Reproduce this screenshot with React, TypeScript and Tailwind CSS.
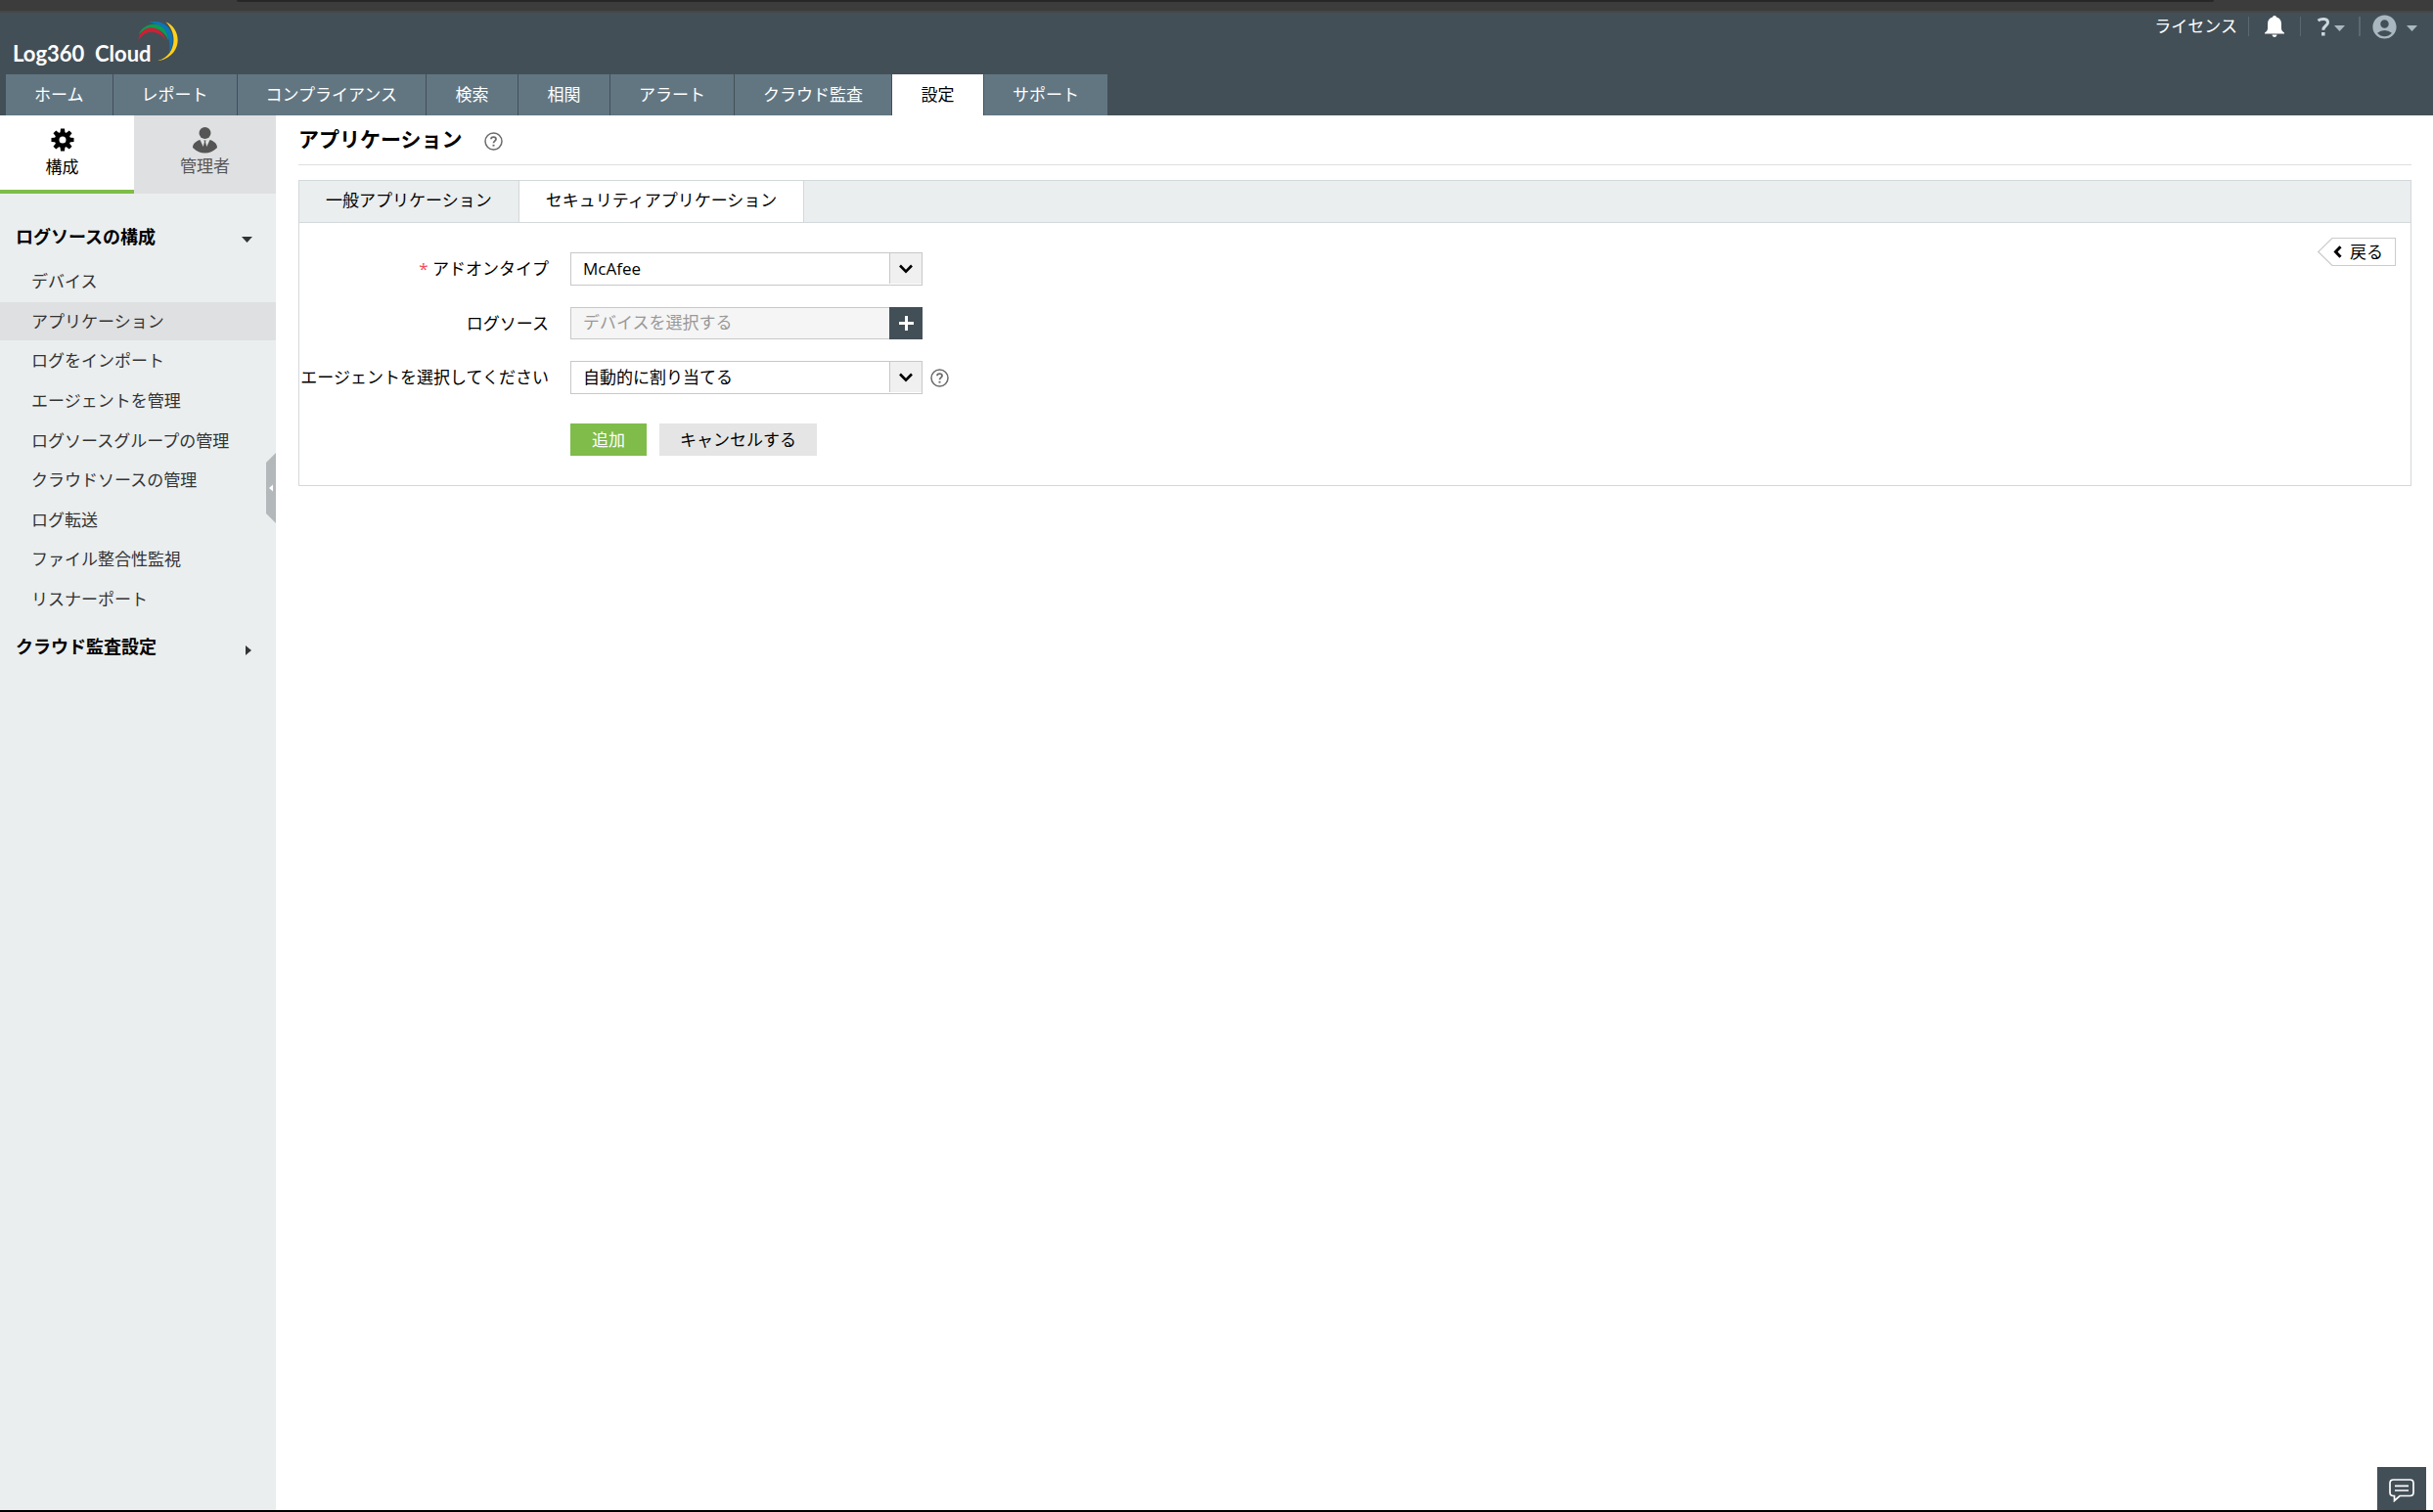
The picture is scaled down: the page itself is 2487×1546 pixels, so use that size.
import React from 'react';
import { MdAccountCircle } from 'react-icons/md';

const navItems = [
  'ホーム',
  'レポート',
  'コンプライアンス',
  '検索',
  '相関',
  'アラート',
  'クラウド監査',
  '設定',
  'サポート',
];

const logSourceItems = [
  'デバイス',
  'アプリケーション',
  'ログをインポート',
  'エージェントを管理',
  'ログソースグループの管理',
  'クラウドソースの管理',
  'ログ転送',
  'ファイル整合性監視',
  'リスナーポート',
];

const ACTIVE_NAV = '設定';
const ACTIVE_ITEM = 'アプリケーション';

const LogoArcs: React.FC = () => (
  <svg width="42" height="42" viewBox="0 0 42 42" aria-hidden="true">
    <path d="M28.500 1.500C45 8 46.500 35 22 41H20.500C37 37 42.500 15 28.500 1.500Z" fill="#ffd01c" />
    <path d="M11 1.800C27 -3 43.500 12 31.500 34C35.500 17 27 4 11 1.800Z" fill="#0b75b8" />
    <path d="M1 14C7 0 29 -1 31.300 20.500C25 7 12 4 1 14Z" fill="#0d9b50" />
    <path d="M.5 21C1.500 4 22 2 28.500 19.500C20 9.500 7 8.500 .5 21Z" fill="#cb2036" />
  </svg>
);

const GearIcon: React.FC = () => (
  <svg width="24" height="24" viewBox="-12 -12 24 24" aria-hidden="true">
    {[0, 45, 90, 135].map((a) => (
      <path key={a} d="M-2 -11.500H2L2.600 -6H-2.600ZM-2.600 6H2.600L2 11.500H-2Z" transform={`rotate(${a})`} />
    ))}
    <circle r="5.800" fill="none" stroke="#000" strokeWidth="4.600" />
  </svg>
);

const AdminIcon: React.FC = () => (
  <svg width="25" height="27" viewBox="0 0 25 27" fill="#555" aria-hidden="true">
    <circle cx="12.500" cy="6" r="6" />
    <path d="M7.500 13L10.700 20L12 15L11.300 13.500H13.700L13 15L14.300 20L17.500 13C22 14.500 25 17 25 21C21 25 17 26.500 12.500 26.500C8 26.500 4 25 0 21C0 17 3 14.500 7.500 13Z" />
  </svg>
);

const BellIcon: React.FC = () => (
  <svg width="20" height="22" viewBox="0 0 20 22" fill="#fff" aria-hidden="true">
    <path d="M10 0C11.200 0 11.800 .6 12 1.500C15.500 2.500 17 5 17 8.500V13C17 15 18 16 20 17.500V18.500H0V17.500C2 16 3 15 3 13V8.500C3 5 4.500 2.500 8 1.500C8.200 .6 8.800 0 10 0ZM7.500 19.500H12.500C12.300 21 11.300 22 10 22C8.700 22 7.700 21 7.500 19.500Z" />
  </svg>
);

const HelpButton: React.FC<{ label: string }> = ({ label }) => (
  <button type="button" aria-label={label} className="block shrink-0">
    <svg width="19" height="19" viewBox="0 0 19 19" fill="none" stroke="#6b6b6b" aria-hidden="true">
      <circle cx="9.500" cy="9.500" r="8.500" strokeWidth="1.500" />
      <path d="M7 7.300C7 4.300 12 4.400 12 7.200C12 9 9.500 9.200 9.500 11.200" strokeWidth="1.800" />
      <path d="M9.500 12.800V14.600" strokeWidth="2" />
    </svg>
  </button>
);

const CaretDown: React.FC<{ className: string }> = ({ className }) => (
  <svg width="11" height="6" viewBox="0 0 11 6" className={className} aria-hidden="true">
    <path d="M0 0H11L5.500 6Z" />
  </svg>
);

const SelectField: React.FC<{ id: string; options: string[] }> = ({ id, options }) => (
  <div className="relative w-90">
    <select id={id} className="block w-full h-[34px] appearance-none border border-[#c8c8c8] bg-white pl-3 pr-10 text-black">
      {options.map((o) => (
        <option key={o}>{o}</option>
      ))}
    </select>
    <span className="pointer-events-none absolute top-px right-px flex h-[31px] w-[33px] items-center justify-center border-l border-[#c8c8c8] bg-[#f0f0f0]">
      <svg width="14" height="10" viewBox="0 0 14 10" fill="none" stroke="#000" strokeWidth="2.600" aria-hidden="true">
        <path d="M1 1.500L7 7.700L13 1.500" />
      </svg>
    </span>
  </div>
);

const Header: React.FC = () => (
  <header className="bg-[#434f57]">
    <div className="h-[13px] border-b-2 border-[#474747] bg-[#3c3c3c] pl-[242px] pr-[224px]">
      <div className="h-0.5 rounded-b-sm bg-[#272727]"></div>
    </div>
    <div className="flex h-[63px] items-start justify-between pl-[13px] pr-4">
      <a href="#home" aria-label="Log360 Cloud" className="flex items-start pt-2">
        <span className="whitespace-pre pt-5 font-[Lato] text-[22px] leading-7 font-bold text-white">Log360  Cloud</span>
        <span className="-ml-3.5"><LogoArcs /></span>
      </a>
      <div className="flex h-7 items-center text-white">
        <a href="#license" className="pr-[11px] pb-px">ライセンス</a>
        <button type="button" aria-label="通知" className="flex h-5 items-center border-l border-[#5b6870] px-4">
          <BellIcon />
        </button>
        <button type="button" aria-label="ヘルプ" className="flex h-5 items-center gap-1 border-l border-[#5b6870] pl-4 pr-3.5">
          <svg width="14" height="19" viewBox="0 0 14 19" fill="none" stroke="#cdd8dd" strokeWidth="3" aria-hidden="true">
            <path d="M1.500 3C5 .8 11.500 .8 11.500 5C11.500 8.500 6.800 8 6.800 12.800" />
            <path d="M6.800 15V18.500" strokeWidth="3.500" />
          </svg>
          <CaretDown className="mt-1 fill-[#a9b8c0]" />
        </button>
        <button type="button" aria-label="アカウント" className="flex h-5 items-center gap-2 border-l-2 border-[#5b6870] pl-2.5">
          <MdAccountCircle className="size-[29px] text-[#a9b8c0]" />
          <CaretDown className="mt-1 fill-[#a9b8c0]" />
        </button>
      </div>
    </div>
    <nav className="flex gap-px pl-1.5 text-center">
      {navItems.map((item) => (
        <a
          key={item}
          href={`#${item}`}
          className={
            item === ACTIVE_NAV
              ? 'h-[42px] min-w-[93px] bg-white px-[29px] leading-[42px] text-black'
              : 'h-[42px] min-w-[93px] bg-[#627682] px-[29px] leading-[42px] text-white'
          }
        >
          {item}
        </a>
      ))}
    </nav>
  </header>
);

const Sidebar: React.FC = () => (
  <aside className="relative w-[282px] shrink-0 bg-[#eaeeef]">
    <div className="flex h-20">
      <a href="#config" className="flex w-[137px] flex-col items-center gap-1 border-b-4 border-[#7fbc49] bg-white pt-[13px] pr-2.5 text-black">
        <GearIcon />
        <span>構成</span>
      </a>
      <a href="#admin" className="flex flex-1 flex-col items-center gap-px bg-[#dfe0e2] pt-3 text-[#555]">
        <AdminIcon />
        <span>管理者</span>
      </a>
    </div>
    <nav className="pt-8">
      <button type="button" className="flex h-6 w-full items-center justify-between pl-4 pr-6 text-lg leading-6 font-bold text-black">
        ログソースの構成
        <CaretDown className="mt-1.5 fill-[#333]" />
      </button>
      <ul className="mt-3.5 flex h-[364px] flex-col justify-between">
        {logSourceItems.map((item) => (
          <li key={item}>
            <a
              href={`#${item}`}
              className={item === ACTIVE_ITEM ? 'block h-[39px] bg-[#dfe0e2] pl-8 leading-[39px]' : 'block h-[39px] pl-8 leading-[39px]'}
            >
              {item}
            </a>
          </li>
        ))}
      </ul>
      <button type="button" className="mt-[17px] flex h-6 w-full items-center justify-between pl-4 pr-[25px] text-lg leading-6 font-bold text-black">
        クラウド監査設定
        <svg width="6" height="10" viewBox="0 0 6 10" fill="#333" className="mt-2" aria-hidden="true">
          <path d="M0 0L6 5L0 10Z" />
        </svg>
      </button>
    </nav>
    <button type="button" aria-label="サイドバーを閉じる" className="absolute top-[345px] right-0">
      <svg width="10" height="72" viewBox="0 0 10 72" aria-hidden="true">
        <path d="M10 0V72L0 62V10Z" fill="#b3b8bb" />
        <path d="M7 32.500V39.500L3 36Z" fill="#fff" />
      </svg>
    </button>
  </aside>
);

const AddonForm: React.FC = () => (
  <form className="flex flex-col gap-[22px] py-[30px]" onSubmit={(e) => e.preventDefault()}>
    <div className="flex items-center gap-[22px]">
      <label htmlFor="addon" className="w-[255px] text-right">
        <span className="text-[#f44a55]">*</span> アドオンタイプ
      </label>
      <SelectField id="addon" options={['McAfee']} />
    </div>
    <div className="flex items-center gap-[22px]">
      <label htmlFor="source" className="w-[255px] text-right">ログソース</label>
      <div className="flex w-90">
        <input
          id="source"
          type="text"
          readOnly
          placeholder="デバイスを選択する"
          className="h-[33px] min-w-0 flex-1 border border-r-0 border-[#c8c8c8] bg-[#f5f5f5] px-3 pb-0.5 placeholder:text-[#999]"
        />
        <button type="button" aria-label="デバイスを追加" className="flex h-[33px] w-[34px] items-center justify-center bg-[#434f57]">
          <svg width="15" height="15" viewBox="0 0 15 15" stroke="#fff" strokeWidth="3" aria-hidden="true">
            <path d="M7.500 0V15M0 7.500H15" />
          </svg>
        </button>
      </div>
    </div>
    <div className="flex items-center gap-[22px]">
      <label htmlFor="agent" className="w-[255px] whitespace-nowrap text-right">エージェントを選択してください</label>
      <div className="flex items-center gap-2">
        <SelectField id="agent" options={['自動的に割り当てる']} />
        <HelpButton label="エージェントのヘルプ" />
      </div>
    </div>
    <div className="flex gap-[13px] pt-2 pl-[277px]">
      <button type="submit" className="h-[33px] bg-[#7fbc49] px-[22px] text-white">追加</button>
      <button type="button" className="h-[33px] bg-[#e5e5e5] px-[21px]">キャンセルする</button>
    </div>
  </form>
);

const App: React.FC = () => {
  return (
    <div className="flex min-h-screen flex-col border-b-2 border-black bg-white font-['Open_Sans','Noto_Sans_CJK_JP',sans-serif] text-[17px] leading-6 text-black">
      <Header />
      <div className="flex flex-1 text-[#333]">
        <Sidebar />
        <main className="min-w-0 flex-1 pt-2 pr-[22px] pl-[23px] text-black">
          <div className="flex h-[43px] items-start gap-[22px] border-b border-[#dcdfe1]">
            <h1 className="text-[21px] leading-8 font-bold">アプリケーション</h1>
            <div className="pt-[9px]">
              <HelpButton label="ヘルプ" />
            </div>
          </div>

          <section className="mt-[15px] border border-[#d3d8db]">
            <div className="flex h-[43px] border-b border-[#d3d8db] bg-[#eaeeef]">
              <button type="button" className="border-r border-[#d3d8db] px-[27px] pb-0.5">一般アプリケーション</button>
              <button type="button" className="border-r border-[#d3d8db] bg-white px-[27px] pb-0.5">セキュリティアプリケーション</button>
            </div>
            <div className="relative">
              <AddonForm />
              {/* Arrow shaped back link */}
              <a href="#back" className="absolute top-[15px] right-[15px] flex h-[29px] items-stretch">
                <svg width="16" height="29" viewBox="0 0 16 29" fill="none" stroke="#ccc" aria-hidden="true">
                  <path d="M16 .5H15L.7 14.500L15 28.500H16" strokeWidth="1.200" />
                </svg>
                <span className="flex items-center gap-2 border-y border-r border-[#ccc] pr-3">
                  <svg width="9" height="13" viewBox="0 0 9 13" fill="none" stroke="#000" strokeWidth="3" aria-hidden="true">
                    <path d="M7.500 1.200L2.500 6.500L7.500 11.800" />
                  </svg>
                  戻る
                </span>
              </a>
            </div>
          </section>
        </main>
      </div>

      <button type="button" aria-label="チャット" className="fixed right-[7px] bottom-0.5 flex h-11 w-[50px] items-center justify-center bg-[#434f57]">
        <svg width="26" height="24" viewBox="0 0 26 24" fill="none" stroke="#fff" strokeWidth="1.700" className="mt-1" aria-hidden="true">
          <path d="M4.500 1H21.500Q25 1 25 4.500V14Q25 17.500 21.500 17.500H11L5.500 22.500V17.500H4.500Q1 17.500 1 14V4.500Q1 1 4.500 1Z" />
          <path d="M6 7.300H20M6 12H20" />
        </svg>
      </button>
    </div>
  );
};

export default App;
